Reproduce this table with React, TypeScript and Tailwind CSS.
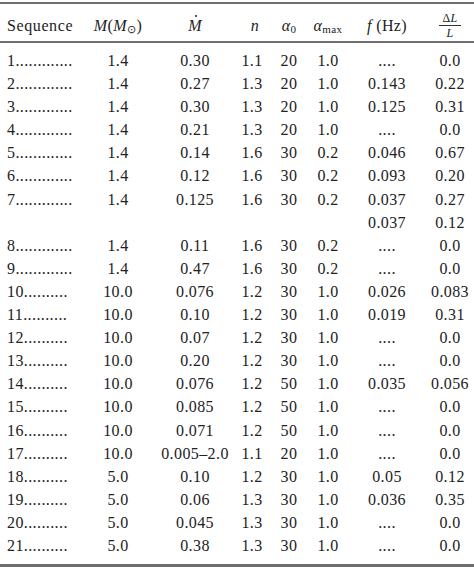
import React from 'react';

type Row = [string, string, string, string, string, string, string, string];

const rows: Row[] = [
  ['1', '1.4', '0.30', '1.1', '20', '1.0', '....', '0.0'],
  ['2', '1.4', '0.27', '1.3', '20', '1.0', '0.143', '0.22'],
  ['3', '1.4', '0.30', '1.3', '20', '1.0', '0.125', '0.31'],
  ['4', '1.4', '0.21', '1.3', '20', '1.0', '....', '0.0'],
  ['5', '1.4', '0.14', '1.6', '30', '0.2', '0.046', '0.67'],
  ['6', '1.4', '0.12', '1.6', '30', '0.2', '0.093', '0.20'],
  ['7', '1.4', '0.125', '1.6', '30', '0.2', '0.037', '0.27'],
  ['', '', '', '', '', '', '0.037', '0.12'],
  ['8', '1.4', '0.11', '1.6', '30', '0.2', '....', '0.0'],
  ['9', '1.4', '0.47', '1.6', '30', '0.2', '....', '0.0'],
  ['10', '10.0', '0.076', '1.2', '30', '1.0', '0.026', '0.083'],
  ['11', '10.0', '0.10', '1.2', '30', '1.0', '0.019', '0.31'],
  ['12', '10.0', '0.07', '1.2', '30', '1.0', '....', '0.0'],
  ['13', '10.0', '0.20', '1.2', '30', '1.0', '....', '0.0'],
  ['14', '10.0', '0.076', '1.2', '50', '1.0', '0.035', '0.056'],
  ['15', '10.0', '0.085', '1.2', '50', '1.0', '....', '0.0'],
  ['16', '10.0', '0.071', '1.2', '50', '1.0', '....', '0.0'],
  ['17', '10.0', '0.005–2.0', '1.1', '20', '1.0', '....', '0.0'],
  ['18', '5.0', '0.10', '1.2', '30', '1.0', '0.05', '0.12'],
  ['19', '5.0', '0.06', '1.3', '30', '1.0', '0.036', '0.35'],
  ['20', '5.0', '0.045', '1.3', '30', '1.0', '....', '0.0'],
  ['21', '5.0', '0.38', '1.3', '30', '1.0', '....', '0.0'],
];

const grid = 'grid grid-cols-[80px_76px_78px_36px_38px_40px_78px_48px] items-center';

const label = (seq: string) =>
  seq === '' ? '' : seq + (seq.length === 1 ? '.............' : '..........');

const App: React.FC = () => {
  return (
    <div className="w-[474px] h-[570px] bg-white pt-[2px] text-[#222] font-['Liberation_Serif',serif] text-[16px] tracking-[0.4px]">
      <div className="border-t-2 border-b-[3px] border-[#6e6e6e]">
        {/* header */}
        <div className={`${grid} h-[39px] pt-[6px] border-b-2 border-[#707070] text-center whitespace-nowrap`}>
          <div className="text-left pl-[7px] tracking-[0.6px]">Sequence</div>
          <div>
            <i>M</i>(<i>M</i>
            <sub className="text-[11px]">⊙</sub>)
          </div>
          <div>
            <span className="relative inline-block">
              <i>M</i>
              <span className="absolute left-[7px] top-[1px] w-[2px] h-[2px] rounded-full bg-[#222]" />
            </span>
          </div>
          <div className="pl-[6px]">
            <i>n</i>
          </div>
          <div>
            <i>α</i>
            <sub className="text-[11px]">0</sub>
          </div>
          <div>
            <i>α</i>
            <sub className="text-[11px]">max</sub>
          </div>
          <div>
            <i>f</i> (Hz)
          </div>
          <div className="flex justify-center">
            <div className="flex flex-col items-center text-[12px] leading-[12px]">
              <span>
                Δ<i>L</i>
              </span>
              <span className="w-[22px] mt-[1px] border-t border-[#333]" />
              <span className="mt-[1px]">
                <i>L</i>
              </span>
            </div>
          </div>
        </div>
        {/* body */}
        <div className="pt-[6px] pb-[7px]">
          {rows.map((r, i) => (
            <div key={i} className={`${grid} h-[23.1px] text-center whitespace-nowrap`}>
              <div className="text-left pl-[7px]">{label(r[0])}</div>
              {r.slice(1).map((v, j) => (
                <div key={j}>{v}</div>
              ))}
            </div>
          ))}
        </div>
      </div>
    </div>
  );
};

export default App;
